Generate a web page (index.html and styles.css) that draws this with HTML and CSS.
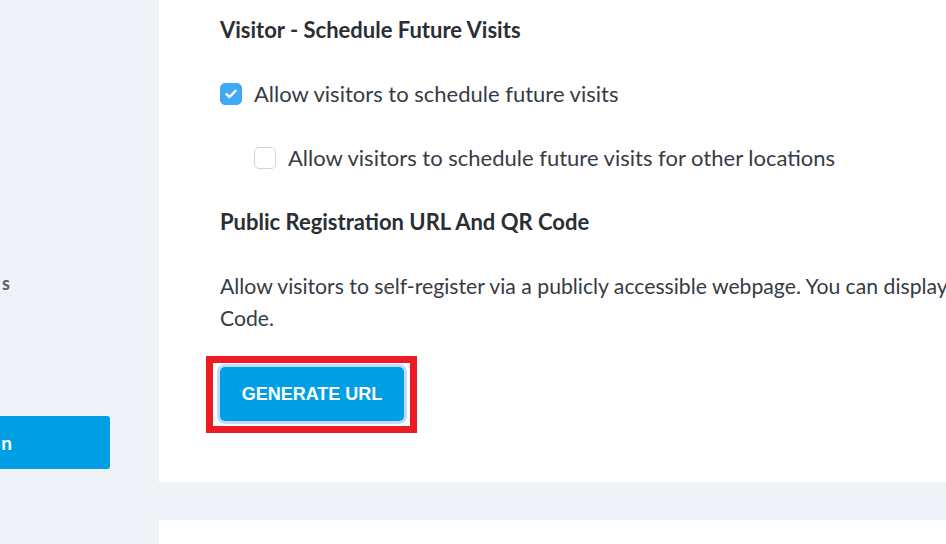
FILE: index.html
```html
<!DOCTYPE html>
<html lang="en">
<head>
    <meta charset="UTF-8">
    <meta name="viewport" content="width=device-width, initial-scale=1.0">
    <title>Visitor Settings</title>
    <link rel="stylesheet" href="styles.css">
</head>
<body>

<div class="layout">
    <div class="sidebar">
        <div class="side-inner">
            <div class="side-link">Visitors</div>
            <button class="side-button" type="button">Save Location</button>
        </div>
    </div>

    <div class="main">
        <div class="card">
            <h3 class="section-title">Visitor - Schedule Future Visits</h3>

            <label class="check-row">
                <span class="box checked">
                    <svg width="12" height="10" viewBox="0 0 12 10"><path d="M1.5 5.2 L4.5 8 L10.5 1.8" fill="none" stroke="#fff" stroke-width="2.4" stroke-linecap="round" stroke-linejoin="round"/></svg>
                </span>
                Allow visitors to schedule future visits
            </label>

            <label class="check-row sub">
                <span class="box"></span>
                Allow visitors to schedule future visits for other locations
            </label>

            <h3 class="section-title second">Public Registration URL And QR Code</h3>

            <p class="desc">Allow visitors to self-register via a publicly accessible webpage. You can display it via a URL or QR<br>Code.</p>

            <div class="highlight">
                <button class="btn-primary" type="button">GENERATE URL</button>
            </div>
        </div>

        <div class="card next"></div>
    </div>
</div>

</body>
</html>
```

FILE: styles.css
```css
body {
    margin: 0;
    padding: 0;
    background-color: #eff3f8;
    font-family: Lato, "Open Sans", sans-serif;
    color: #363b44;
    overflow: hidden;
}
.layout {
    display: flex;
    height: 544px;
}
.sidebar {
    width: 159px;
    flex-shrink: 0;
    overflow: hidden;
}
.side-inner {
    width: 110px;
    padding-top: 271px;
    display: flex;
    flex-direction: column;
    align-items: flex-end;
}
.side-link {
    font-size: 18px;
    font-weight: 700;
    color: #58606d;
    line-height: 24px;
    white-space: nowrap;
    margin-right: 97px;
    letter-spacing: 3px;
}
.side-button {
    margin-top: 121px;
    width: 270px;
    height: 53px;
    flex-shrink: 0;
    border: none;
    border-radius: 3px;
    background-color: #009fe5;
    color: #fff;
    font-family: inherit;
    font-size: 19px;
    font-weight: 700;
    text-align: right;
    white-space: nowrap;
    padding-right: 95px;
    letter-spacing: 3px;
}
.main {
    width: 1100px;
    flex-shrink: 0;
}
.card {
    background-color: #ffffff;
    height: 482px;
    padding-left: 61px;
    box-sizing: border-box;
    padding-top: 16px;
}
.card.next {
    margin-top: 38px;
    height: 40px;
    padding: 0;
}
.section-title {
    margin: 0;
    font-size: 22px;
    line-height: 28px;
    font-weight: 700;
    color: #2b2e33;
}
.section-title.second {
    margin-top: 36px;
}
.check-row {
    display: flex;
    align-items: center;
    gap: 12px;
    font-size: 22px;
    line-height: 28px;
    margin-top: 36px;
}
.check-row.sub {
    margin-left: 34px;
    margin-top: 36px;
}
.box {
    width: 22px;
    height: 22px;
    box-sizing: border-box;
    border: 1px solid #cfd5de;
    border-radius: 5px;
    background-color: #fff;
    display: flex;
    align-items: center;
    justify-content: center;
}
.box.checked {
    background-color: #3fa9f5;
    border-color: #3fa9f5;
}
.desc {
    margin: 34px 0 0;
    font-size: 21.2px;
    line-height: 32px;
    width: 1050px;
}
.highlight {
    margin-top: 22px;
    margin-left: -14px;
    width: 211px;
    box-sizing: border-box;
    border: 7px solid #ed1c24;
    padding: 4px 6px 5px 7px;
}
.btn-primary {
    display: block;
    width: 184px;
    height: 54px;
    border: none;
    border-radius: 5px;
    background-color: #009fe5;
    color: #fff;
    font-family: "Liberation Sans", Arial, sans-serif;
    font-size: 18px;
    font-weight: 700;
    box-shadow: 0 0 0 3px #bfdcfb;
}
```
